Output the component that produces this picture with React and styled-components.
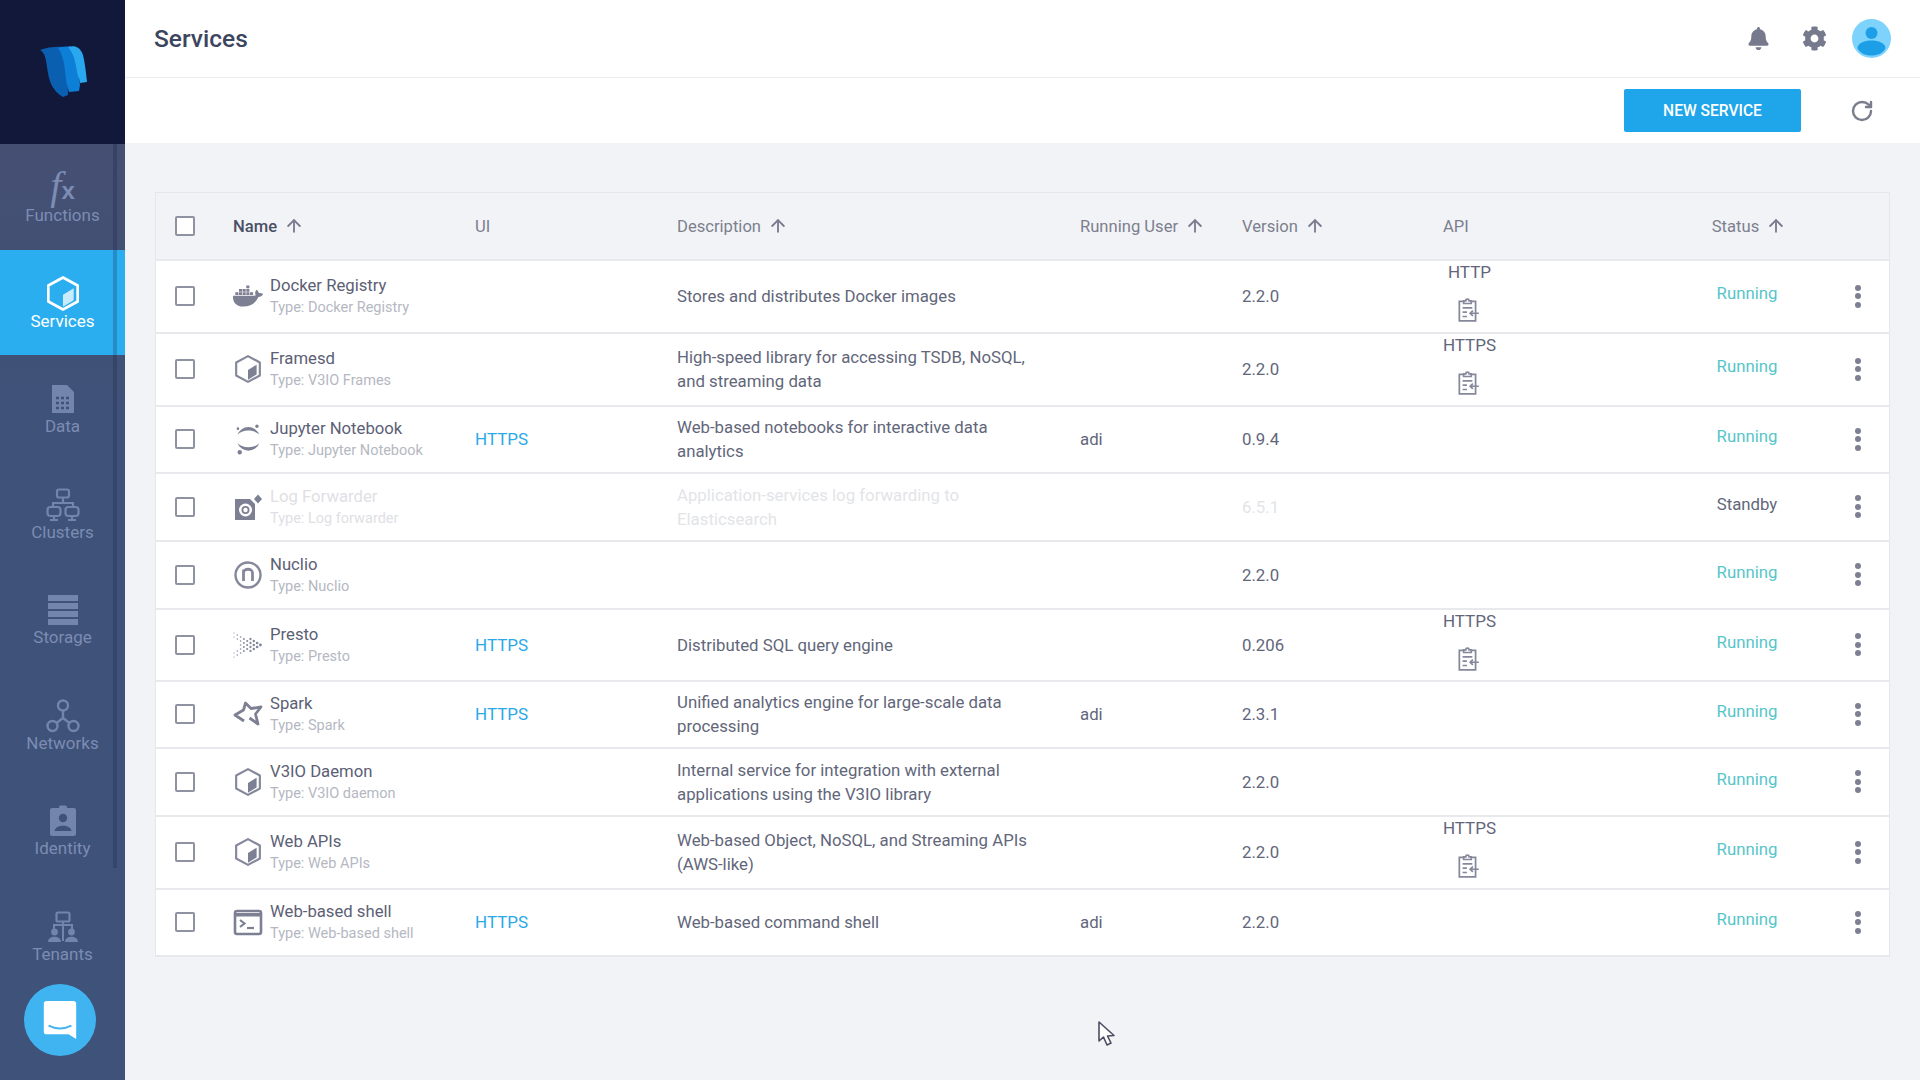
import React from "react";
import styled, { createGlobalStyle } from "styled-components";
import { ArrowUp, RotateCw } from "lucide-react";
import { FaBell, FaCog, FaDocker } from "react-icons/fa";
import { SiJupyter } from "react-icons/si";

const navItems = [
  { label: "Functions", icon: "fx" },
  { label: "Services", icon: "services", active: true },
  { label: "Data", icon: "data" },
  { label: "Clusters", icon: "clusters" },
  { label: "Storage", icon: "storage" },
  { label: "Networks", icon: "networks" },
  { label: "Identity", icon: "identity" },
  { label: "Tenants", icon: "tenants" },
];

const rows = [
  { name: "Docker Registry", type: "Docker Registry", icon: "docker", description: "Stores and distributes Docker images", version: "2.2.0", api: "HTTP", height: 72.5 },
  { name: "Framesd", type: "V3IO Frames", icon: "cube", description: "High-speed library for accessing TSDB, NoSQL, and streaming data", version: "2.2.0", api: "HTTPS", height: 73 },
  { name: "Jupyter Notebook", type: "Jupyter Notebook", icon: "jupyter", ui: "HTTPS", description: "Web-based notebooks for interactive data analytics", user: "adi", version: "0.9.4", height: 67.5 },
  { name: "Log Forwarder", type: "Log forwarder", icon: "log", description: "Application-services log forwarding to Elasticsearch", version: "6.5.1", status: "Standby", height: 67.5 },
  { name: "Nuclio", type: "Nuclio", icon: "nuclio", version: "2.2.0", height: 68 },
  { name: "Presto", type: "Presto", icon: "presto", ui: "HTTPS", description: "Distributed SQL query engine", version: "0.206", api: "HTTPS", height: 72 },
  { name: "Spark", type: "Spark", icon: "spark", ui: "HTTPS", description: "Unified analytics engine for large-scale data processing", user: "adi", version: "2.3.1", height: 67 },
  { name: "V3IO Daemon", type: "V3IO daemon", icon: "cube", description: "Internal service for integration with external applications using the V3IO library", version: "2.2.0", height: 68 },
  { name: "Web APIs", type: "Web APIs", icon: "cube", description: "Web-based Object, NoSQL, and Streaming APIs (AWS-like)", version: "2.2.0", api: "HTTPS", height: 73 },
  { name: "Web-based shell", type: "Web-based shell", icon: "shell", ui: "HTTPS", description: "Web-based command shell", user: "adi", version: "2.2.0", height: 67 },
];

const columns = [
  { label: "Name", sortable: true, strong: true },
  { label: "UI" },
  { label: "Description", sortable: true },
  { label: "Running User", sortable: true },
  { label: "Version", sortable: true },
  { label: "API" },
];

const CubeIcon = ({ color = "#85889a", shard = "#7d8092", width = 26, height = 28 }) => (
  <svg width={width} height={height} viewBox="3 2 24 26" fill="none">
    <path d="M15 3 L26 9 V21 L15 27 L4 21 V9 Z" stroke={color} strokeWidth="2" strokeLinejoin="round" />
    <path d="M15 16 L23 11 V20 L15 25 Z" fill={shard} />
  </svg>
);

const PrestoIcon = () => {
  const dots = [];
  for (let col = 0; col < 9; col++) {
    const half = 12.5 * (1 - col / 10);
    const notch = col < 2 ? (2 - col) * 3 : 0;
    for (let k = -4; k <= 4; k++) {
      const offset = (k + (col % 2) / 2) * 4;
      if (Math.abs(offset) > half || Math.abs(offset) < notch) continue;
      dots.push(<circle key={`${col}-${k}`} cx={1 + col * 3.3} cy={15 + offset} r={0.6 + col * 0.11} fill="#85889a" />);
    }
  }
  return (
    <svg width="30" height="30" viewBox="0 0 30 30">
      {dots}
    </svg>
  );
};

const ServiceIcon = ({ name }) => {
  if (name === "docker") return <FaDocker size={30} color="#7d8092" />;
  if (name === "jupyter") return <SiJupyter size={33} color="#7d8092" />;
  if (name === "cube") return <CubeIcon />;
  if (name === "presto") return <PrestoIcon />;
  if (name === "nuclio")
    return (
      <svg width="30" height="30" viewBox="0 0 30 30" fill="none" stroke="#85889a">
        <circle cx="15" cy="15" r="12.5" strokeWidth="2.4" />
        <path d="M10.5 9.5 V21 M10.5 13 C10.5 8 19.5 8 19.5 13 V21" strokeWidth="2.8" />
      </svg>
    );
  if (name === "spark")
    return (
      <svg width="30" height="30" viewBox="0 0 30 30" fill="none">
        <path d="M11 22 L2 16 L10.5 11 L12.5 4 L18 9.5 L28 8 L22.5 15 L25 25 L16.5 19" stroke="#7d8092" strokeWidth="2.8" strokeLinejoin="round" />
      </svg>
    );
  if (name === "log")
    return (
      <svg width="30" height="30" viewBox="0 0 30 30">
        <path d="M2 7 H17 L22 12 V28 H2 Z" fill="#7d8092" />
        <circle cx="12.5" cy="18" r="6.5" fill="#fff" />
        <circle cx="12.5" cy="18" r="4" fill="#7d8092" />
        <circle cx="12.5" cy="18" r="2.2" fill="#fff" />
        <path d="M21 7 L25 2.5 L29 7 L25 11.5 Z" fill="#7d8092" />
      </svg>
    );
  return (
    <svg width="30" height="30" viewBox="0 0 30 30" fill="none">
      <rect x="2" y="4" width="26" height="23" rx="2" stroke="#7d8092" strokeWidth="2.6" />
      <path d="M2 6 H28 V9.5 H2 Z" fill="#7d8092" />
      <path d="M7 13 L11.5 16.5 L7 20" stroke="#7d8092" strokeWidth="2.2" />
      <path d="M14 21 H21" stroke="#7d8092" strokeWidth="2.2" />
    </svg>
  );
};

const ApiDocIcon = () => (
  <svg width="26" height="26" viewBox="0 0 24 24" fill="none" stroke="#85889a" strokeWidth="1.6">
    <path d="M8 4 H4 V22 H19 V4 H15" />
    <path d="M8 6 V3.5 H10 C10 1.5 13 1.5 13 3.5 H15 V6 Z" />
    <path d="M7 10 H16 M7 14 H11 M7 18 H11" />
    <path d="M22 15 H14 M16.5 12.5 L14 15 L16.5 17.5" />
  </svg>
);

const NavIcon = ({ name, color }) => {
  if (name === "fx") return <FxMark>f<small>x</small></FxMark>;
  if (name === "services") return <CubeIcon color={color} shard="rgba(255,255,255,0.75)" width={32} height={35} />;
  if (name === "data")
    return (
      <svg width="30" height="32" viewBox="0 0 30 32">
        <path d="M4 2 H19 L26 9 V30 H4 Z" fill={color} />
        <path d="M8 15 H22 M8 20 H22 M8 25 H22" stroke="#3f5279" strokeWidth="2.4" strokeDasharray="3 2" />
      </svg>
    );
  if (name === "clusters")
    return (
      <svg width="34" height="34" viewBox="0 0 34 34" fill="none" stroke={color} strokeWidth="2.2">
        <rect x="11" y="1.5" width="12" height="8" rx="2" />
        <path d="M17 10 V15 M7 19 V15 H27 V19" />
        <rect x="1.5" y="19" width="13" height="9" rx="3" />
        <rect x="19.5" y="19" width="13" height="9" rx="3" />
        <path d="M8 28 V32 M26 28 V32 M4 32 H12 M22 32 H30" />
      </svg>
    );
  if (name === "storage")
    return (
      <svg width="30" height="32" viewBox="0 0 30 32" fill={color}>
        <rect y="1" width="30" height="6" />
        <rect y="9" width="30" height="6" />
        <rect y="17" width="30" height="6" />
        <rect y="25" width="30" height="6" />
      </svg>
    );
  if (name === "networks")
    return (
      <svg width="34" height="34" viewBox="0 0 34 34" fill="none" stroke={color} strokeWidth="2.4">
        <circle cx="17" cy="6.5" r="5" />
        <circle cx="6.5" cy="27" r="5" />
        <circle cx="27.5" cy="27" r="5" />
        <path d="M17 11.5 V19 M17 19 L10.5 24 M17 19 L23.5 24" />
      </svg>
    );
  if (name === "identity")
    return (
      <svg width="30" height="32" viewBox="0 0 30 32">
        <rect x="2" y="3" width="26" height="28" rx="2" fill={color} />
        <rect x="11" y="0.5" width="8" height="5" rx="1.5" fill={color} />
        <circle cx="15" cy="13" r="4.2" fill="#3f5279" />
        <path d="M6.5 26 C7.5 19 22.5 19 23.5 26 Z" fill="#3f5279" />
      </svg>
    );
  return (
    <svg width="32" height="32" viewBox="0 0 32 32">
      <rect x="9.5" y="1.5" width="13" height="9" rx="1.5" fill="none" stroke={color} strokeWidth="2.2" />
      <path d="M16 11 V14 M7 19 V14 H25 V19 M16 14 V30" stroke={color} strokeWidth="2" fill="none" />
      <circle cx="7.5" cy="21" r="3.4" fill={color} />
      <circle cx="24.5" cy="21" r="3.4" fill={color} />
      <path d="M1 31 C1 24 14 24 14 31 Z M18 31 C18 24 31 24 31 31 Z" fill={color} />
    </svg>
  );
};

const Logo = () => (
  <svg width="80" height="75" viewBox="0 0 80 75">
    <path d="M15 15 C22 12 32 11 42 12 L43 60 L38 62 C28 56 24 48 22 32 C21 24 20 18 15 15Z" fill="#0a5fb0" />
    <path d="M33 13 C40 11 46 11 50 13 L55 50 L54 56 L44 57 L42 50 C40 40 40 22 33 13Z" fill="#0d7fd6" />
    <path d="M43 12 C50 10 55 12 58 20 C60 28 61 38 62 47 L55 48 L54 43 C51 38 52 22 43 12Z" fill="#29a8f0" />
  </svg>
);

const SortableLabel = ({ column }) => (
  <HeaderCell $strong={column.strong}>
    {column.label}
    {column.sortable && <ArrowUp size={20} strokeWidth={2.2} color="#777b8d" />}
  </HeaderCell>
);

const App = () => (
  <>
    <GlobalStyle />
    <Page>
      <Sidebar>
        <LogoBox>
          <Logo />
        </LogoBox>
        <Nav>
          {navItems.map((item) => (
            <NavItem key={item.label} $active={item.active}>
              <NavIconBox>
                <NavIcon name={item.icon} color={item.active ? "#fff" : "#7384ad"} />
              </NavIconBox>
              {item.label}
            </NavItem>
          ))}
        </Nav>
        <NavScrollbar />
        <ChatButton>
          <svg width="36" height="40" viewBox="0 0 36 42">
            <path d="M4 1 H32 Q35 1 35 4 V41 L27 36 H4 Q1 36 1 33 V4 Q1 1 4 1 Z" fill="#fff" />
            <path d="M6 27 Q18 33 30 27" stroke="#3fb4f0" strokeWidth="2" fill="none" />
          </svg>
        </ChatButton>
      </Sidebar>
      <Content>
        <TopBar>
          <PageTitle>Services</PageTitle>
          <TopActions>
            <TopIcon><FaBell size={23} /></TopIcon>
            <TopIcon><FaCog size={25} /></TopIcon>
            <Avatar>
              <svg width="39" height="39" viewBox="0 0 39 39">
                <circle cx="19.5" cy="14" r="6" fill="#1d9fe8" />
                <path d="M5.5 29 C6 19 33 19 33.5 29 C30 39 9 39 5.5 29 Z" fill="#1d9fe8" />
              </svg>
            </Avatar>
          </TopActions>
        </TopBar>
        <Toolbar>
          <PrimaryButton>NEW SERVICE</PrimaryButton>
          <RefreshButton><RotateCw size={24} strokeWidth={2.4} /></RefreshButton>
        </Toolbar>
        <Main>
          <Table>
            <HeaderRow>
              <CheckCell><Checkbox /></CheckCell>
              {columns.map((column) => (
                <SortableLabel key={column.label} column={column} />
              ))}
              <StatusHeader>
                Status
                <ArrowUp size={20} strokeWidth={2.2} color="#777b8d" />
              </StatusHeader>
              <span />
            </HeaderRow>
            {rows.map((row) => {
              const standby = row.status === "Standby";
              return (
                <Row key={row.name} $height={row.height}>
                  <CheckCell><Checkbox /></CheckCell>
                  <NameCell>
                    <IconSlot><ServiceIcon name={row.icon} /></IconSlot>
                    <NameText>
                      <ServiceName $dim={standby}>{row.name}</ServiceName>
                      <ServiceType $dim={standby}>Type: {row.type}</ServiceType>
                    </NameText>
                  </NameCell>
                  <div>{row.ui && <UiLink>{row.ui}</UiLink>}</div>
                  <Description $dim={standby}>{row.description}</Description>
                  <TextCell>{row.user}</TextCell>
                  <TextCell $dim={standby}>{row.version}</TextCell>
                  <ApiSlot>
                    {row.api && (
                      <ApiCell>
                        {row.api}
                        <ApiDocIcon />
                      </ApiCell>
                    )}
                  </ApiSlot>
                  <StatusCell $standby={standby}>{row.status || "Running"}</StatusCell>
                  <MenuDots>
                    <i />
                    <i />
                    <i />
                  </MenuDots>
                </Row>
              );
            })}
          </Table>
        </Main>
      </Content>
      <MouseCursor width="20" height="28" viewBox="0 0 20 28">
        <path d="M2 2 V21 L6.5 17 L10 25 L14 23 L10.5 16 L17 15.5 Z" fill="#fff" stroke="#4a4e63" strokeWidth="1.6" strokeLinejoin="round" />
      </MouseCursor>
    </Page>
  </>
);

export default App;

const GlobalStyle = createGlobalStyle`
  html, body {
    margin: 0;
    padding: 0;
    height: 100%;
    background: #f2f3f6;
  }
  body {
    font-family: Roboto, "Liberation Sans", sans-serif;
    overflow: hidden;
  }
  * {
    box-sizing: border-box;
  }
`;

const Page = styled.div`
  display: flex;
  width: 1920px;
  height: 1080px;
  position: relative;
  overflow: hidden;
`;

const Sidebar = styled.aside`
  width: 125px;
  flex-shrink: 0;
  background: linear-gradient(#454f72 144px, #3f5279 420px);
  position: relative;
  display: flex;
  flex-direction: column;
`;

const LogoBox = styled.div`
  height: 144px;
  background: #11183a;
  padding: 35px 0 0 25px;
`;

const Nav = styled.nav`
  display: flex;
  flex-direction: column;
`;

const NavItem = styled.div`
  height: 105.5px;
  padding-top: 26px;
  display: flex;
  flex-direction: column;
  align-items: center;
  font-size: 17px;
  line-height: 18px;
  background: ${(p) => (p.$active ? "#2baeef" : "transparent")};
  color: ${(p) => (p.$active ? "#fff" : "#7c8cb3")};
`;

const NavIconBox = styled.div`
  height: 36px;
  display: flex;
  align-items: center;
  justify-content: center;
`;

const FxMark = styled.span`
  font-family: "Liberation Serif", serif;
  font-style: italic;
  font-size: 40px;
  line-height: 36px;
  color: #7c8cb3;

  small {
    font-family: "Liberation Sans", sans-serif;
    font-style: normal;
    font-weight: 700;
    font-size: 24px;
  }
`;

const NavScrollbar = styled.div`
  position: absolute;
  top: 144px;
  left: 113px;
  width: 4px;
  height: 724px;
  background: rgba(17, 24, 58, 0.22);
`;

const ChatButton = styled.div`
  position: absolute;
  left: 24px;
  top: 984px;
  width: 72px;
  height: 72px;
  border-radius: 50%;
  background: #3fb4f0;
  display: flex;
  align-items: center;
  justify-content: center;
`;

const Content = styled.div`
  flex: 1;
  display: flex;
  flex-direction: column;
  min-width: 0;
`;

const TopBar = styled.header`
  height: 78px;
  background: #fff;
  border-bottom: 1px solid #ebecf0;
  padding: 0 29px;
  display: flex;
  align-items: center;
  justify-content: space-between;
`;

const PageTitle = styled.h1`
  margin: 0;
  font-size: 24.5px;
  font-weight: 500;
  color: #3c4560;
`;

const TopActions = styled.div`
  display: flex;
  align-items: center;
  gap: 24px;
`;

const TopIcon = styled.div`
  width: 32px;
  height: 32px;
  display: flex;
  align-items: center;
  justify-content: center;
  color: #767a8c;
`;

const Avatar = styled.div`
  width: 39px;
  height: 39px;
  margin-left: -2px;
  border-radius: 50%;
  overflow: hidden;
  background: #7dd3fb;
`;

const Toolbar = styled.div`
  height: 65px;
  background: #fff;
  padding: 0 29px 0 0;
  display: flex;
  align-items: center;
  justify-content: flex-end;
`;

const PrimaryButton = styled.button`
  width: 177px;
  height: 43px;
  border: none;
  border-radius: 2px;
  background: #1fa5ea;
  color: #fff;
  font-family: inherit;
  font-size: 15.6px;
  font-weight: 500;
`;

const RefreshButton = styled.div`
  width: 58px;
  margin-left: 32px;
  display: flex;
  justify-content: center;
  color: #7a7d8c;
`;

const Main = styled.main`
  flex: 1;
  padding: 49px 30px 0;
`;

const Table = styled.div`
  border: 1px solid #e6e7eb;
  border-bottom: none;
`;

const grid = `
  display: grid;
  grid-template-columns: 77px 242px 202px 403px 162px 201px 247px 112px 1fr;
  align-items: center;
`;

const HeaderRow = styled.div`
  ${grid}
  height: 68px;
  background: #f2f3f6;
  border-bottom: 2px solid #e8e9ed;
`;

const HeaderCell = styled.div`
  display: flex;
  align-items: center;
  gap: 7px;
  font-size: 16.6px;
  font-weight: ${(p) => (p.$strong ? 500 : 400)};
  color: ${(p) => (p.$strong ? "#4a4f66" : "#7c7f8f")};
`;

const StatusHeader = styled(HeaderCell)`
  justify-content: center;
  padding-left: 6px;
`;

const Row = styled.div`
  ${grid}
  height: ${(p) => p.$height}px;
  background: #fff;
  border-bottom: 2px solid #e8e9ed;
  font-size: 16.8px;
  color: #62667a;
`;

const CheckCell = styled.div`
  padding-left: 19px;
  display: flex;
`;

const Checkbox = styled.span`
  width: 20px;
  height: 20px;
  border: 2px solid #8f92a1;
  border-radius: 2px;
  background: #fff;
`;

const NameCell = styled.div`
  display: flex;
  align-items: center;
  gap: 7px;
`;

const IconSlot = styled.div`
  width: 30px;
  height: 30px;
  flex-shrink: 0;
  display: flex;
  align-items: center;
  justify-content: center;
`;

const NameText = styled.div`
  display: flex;
  flex-direction: column;
  padding-top: 2px;
`;

const ServiceName = styled.span`
  font-size: 16.7px;
  line-height: 22px;
  color: ${(p) => (p.$dim ? "#dfe0e5" : "#5c6075")};
`;

const ServiceType = styled.span`
  font-size: 14.5px;
  line-height: 22px;
  color: ${(p) => (p.$dim ? "#dfe0e5" : "#b5b8c2")};
`;

const UiLink = styled.span`
  color: #2aa8e8;
  font-size: 17px;
`;

const Description = styled.div`
  line-height: 24px;
  padding-right: 48px;
  color: ${(p) => (p.$dim ? "#e3e4e8" : "inherit")};
`;

const TextCell = styled.div`
  color: ${(p) => (p.$dim ? "#e3e4e8" : "inherit")};
`;

const ApiSlot = styled.div`
  align-self: start;
  padding-top: 1px;
`;

const ApiCell = styled.div`
  display: flex;
  flex-direction: column;
  align-items: center;
  gap: 15px;
  width: 53px;
  line-height: 20px;
  font-size: 17px;

  svg {
    margin-right: 4px;
  }
`;

const StatusCell = styled.div`
  text-align: center;
  margin-top: -6px;
  padding-left: 2px;
  color: ${(p) => (p.$standby ? "#62667a" : "#56c5c9")};
`;

const MenuDots = styled.div`
  display: flex;
  flex-direction: column;
  gap: 2.5px;
  padding-left: 53px;

  i {
    width: 6px;
    height: 6px;
    border-radius: 50%;
    background: #7d8092;
  }
`;

const MouseCursor = styled.svg`
  position: absolute;
  left: 1097px;
  top: 1020px;
`;
